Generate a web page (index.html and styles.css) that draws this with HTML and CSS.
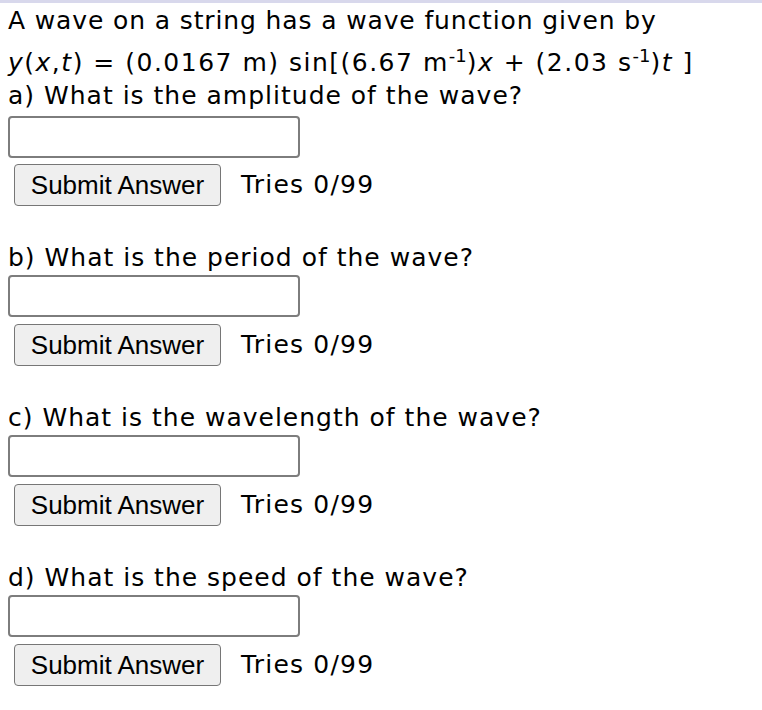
FILE: index.html
```html
<!DOCTYPE html>
<html lang="en">
<head>
    <meta charset="UTF-8">
    <meta name="viewport" content="width=device-width, initial-scale=1.0">
    <title>Wave on a string</title>
    <link rel="stylesheet" href="styles.css">
</head>
<body>
    <div class="page">
        <div class="stem">
            <div class="line first">A wave on a string has a wave function given by</div>
            <div class="line formula"><i>y</i>(<i>x</i>,<i>t</i>) = (0.0167 m) sin[(6.67 m<sup>-1</sup>)<i>x</i> + (2.03 s<sup>-1</sup>)<i>t</i> ]</div>
        </div>

        <!-- part a -->
        <div class="part part-a">
            <div class="line question">a) What is the amplitude of the wave?</div>
            <input type="text" class="answer">
            <div class="submit-row">
                <button type="button">Submit Answer</button>
                <span class="tries">Tries 0/99</span>
            </div>
        </div>

        <!-- part b -->
        <div class="part">
            <div class="line question">b) What is the period of the wave?</div>
            <input type="text" class="answer">
            <div class="submit-row">
                <button type="button">Submit Answer</button>
                <span class="tries">Tries 0/99</span>
            </div>
        </div>

        <!-- part c -->
        <div class="part">
            <div class="line question">c) What is the wavelength of the wave?</div>
            <input type="text" class="answer">
            <div class="submit-row">
                <button type="button">Submit Answer</button>
                <span class="tries">Tries 0/99</span>
            </div>
        </div>

        <!-- part d -->
        <div class="part">
            <div class="line question">d) What is the speed of the wave?</div>
            <input type="text" class="answer">
            <div class="submit-row">
                <button type="button">Submit Answer</button>
                <span class="tries">Tries 0/99</span>
            </div>
        </div>
    </div>
</body>
</html>
```

FILE: styles.css
```css
body {
    margin: 0;
    background-color: white;
    color: #000;
    font-family: "DejaVu Sans", Verdana, sans-serif;
    font-size: 25px;
    letter-spacing: 1px;
    border-top: 3px solid #d8d8ec;
}
.page {
    padding: 3px 8px 0 8px;
}
.line {
    line-height: 30px;
    white-space: nowrap;
}
.first {
    letter-spacing: 0.87px;
}
.formula {
    margin-top: 12px;
    letter-spacing: 1.5px;
}
sup {
    font-size: 0.72em;
    line-height: 0;
    vertical-align: 0.5em;
    letter-spacing: 0;
}
.part {
    margin-top: 37px;
}
.part-a {
    margin-top: 3px;
}
.answer {
    display: block;
    box-sizing: border-box;
    width: 292px;
    height: 42px;
    margin: 2px 0 0 0;
    padding: 0 6px;
    border: 2px solid #7d7d7d;
    border-radius: 4px;
    background-color: white;
    font-size: 20px;
}
.part-a .answer {
    margin-top: 5px;
}
.submit-row {
    display: flex;
    align-items: center;
    gap: 20px;
    margin-top: 7px;
    padding-left: 6px;
}
.part-a .submit-row {
    margin-top: 6px;
}
button {
    box-sizing: border-box;
    width: 207px;
    height: 42px;
    padding: 0;
    background-color: #efefef;
    border: 1px solid #767676;
    border-radius: 4px;
    font-family: "Liberation Sans", Arial, sans-serif;
    font-size: 26px;
    letter-spacing: 0;
    color: #000;
}
.tries {
    line-height: 30px;
    letter-spacing: 1.2px;
}
```
